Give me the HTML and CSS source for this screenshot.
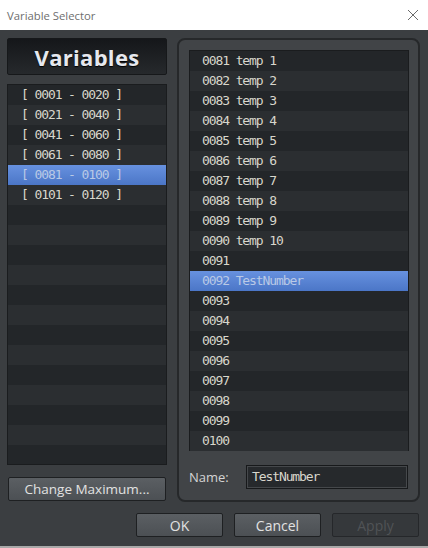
FILE: index.html
```html
<!DOCTYPE html>
<html lang="en">
<head>
  <meta charset="UTF-8">
  <title>Variable Selector</title>
  <link rel="stylesheet" href="styles.css">
</head>
<body>

  <!-- TITLE BAR -->
  <div class="titlebar">
    <span class="title">Variable Selector</span>
    <svg class="close" width="12" height="12" viewBox="0 0 12 12">
      <path d="M1 1 L11 11 M11 1 L1 11" stroke="#6a6a6a" stroke-width="1" fill="none"/>
    </svg>
  </div>

  <div class="dialog">
    <div class="main">

      <!-- LEFT: ranges -->
      <div class="left">
        <div class="heading">Variables</div>
        <ul class="list ranges">
          <li>[ 0001 - 0020 ]</li>
          <li>[ 0021 - 0040 ]</li>
          <li>[ 0041 - 0060 ]</li>
          <li>[ 0061 - 0080 ]</li>
          <li class="selected">[ 0081 - 0100 ]</li>
          <li>[ 0101 - 0120 ]</li>
          <li></li><li></li><li></li><li></li><li></li><li></li><li></li>
          <li></li><li></li><li></li><li></li><li></li><li></li>
        </ul>
        <button class="btn wide">Change Maximum...</button>
      </div>

      <!-- RIGHT: variables -->
      <div class="group">
        <ul class="list vars">
          <li>0081 temp 1</li>
          <li>0082 temp 2</li>
          <li>0083 temp 3</li>
          <li>0084 temp 4</li>
          <li>0085 temp 5</li>
          <li>0086 temp 6</li>
          <li>0087 temp 7</li>
          <li>0088 temp 8</li>
          <li>0089 temp 9</li>
          <li>0090 temp 10</li>
          <li>0091</li>
          <li class="selected">0092 TestNumber</li>
          <li>0093</li>
          <li>0094</li>
          <li>0095</li>
          <li>0096</li>
          <li>0097</li>
          <li>0098</li>
          <li>0099</li>
          <li>0100</li>
        </ul>
        <div class="name-row">
          <label>Name:</label>
          <div class="field">TestNumber</div>
        </div>
      </div>

    </div>

    <div class="footer">
      <button class="btn">OK</button>
      <button class="btn">Cancel</button>
      <button class="btn disabled">Apply</button>
    </div>
  </div>

  <div class="edge"></div>

</body>
</html>
```

FILE: styles.css
```css
body {
  margin: 0;
  width: 428px;
  height: 548px;
  overflow: hidden;
  background: #3b3e41;
  font-family: "Open Sans", "Noto Sans", sans-serif;
}

.titlebar {
  height: 30px;
  background: #fff;
  display: flex;
  align-items: center;
  justify-content: space-between;
  padding: 0 9px 0 7px;
}

.title {
  font-size: 11.3px;
  color: #6e6e6e;
}

.dialog {
  height: 516px;
  box-sizing: border-box;
  padding: 8px 8px 0 7px;
}

.main {
  display: flex;
  gap: 10px;
}

.left {
  width: 160px;
  display: flex;
  flex-direction: column;
}

.heading {
  height: 35px;
  border: 1px solid #16181a;
  border-radius: 2px;
  background: linear-gradient(#15171a, #26292c);
  color: #e6e8ee;
  font-size: 22px;
  font-weight: bold;
  text-align: center;
  line-height: 36px;
  letter-spacing: 0.3px;
  text-shadow: 0 1px 1px #000;
}

.list {
  list-style: none;
  margin: 0;
  padding: 0;
  border: 1px solid #1a1c1e;
  background: #25282b;
  font-family: "DejaVu Sans Mono", monospace;
  font-size: 13px;
  letter-spacing: -1.1px;
  color: #d8d6cc;
}

.list li {
  height: 20px;
  line-height: 20px;
  padding-left: 12px;
  white-space: pre;
}

.list li:nth-child(odd) {
  background: #232629;
}

.list li:nth-child(even) {
  background: #2b2e31;
}

.list li.selected {
  background: linear-gradient(#6791df, #4b76c7);
  color: #b9c9e6;
}

.ranges {
  margin-top: 9px;
  height: 379px;
  overflow: hidden;
}

.ranges li {
  padding-left: 13px;
}

.btn {
  height: 24px;
  padding: 0;
  border: 1px solid #1e2022;
  border-radius: 2px;
  background: linear-gradient(#5b5f63, #4c5054);
  color: #e2e2e2;
  font-family: "Open Sans", "Noto Sans", sans-serif;
  font-size: 14px;
}

.btn.wide {
  width: 158px;
  margin: 12px 0 0 1px;
  font-size: 13.5px;
}

.btn.disabled {
  background: #35383b;
  border-color: #25272a;
  color: #505356;
}

.group {
  width: 243px;
  height: 464px;
  box-sizing: border-box;
  border: 2px solid #26282a;
  border-radius: 8px;
  background: #414447;
  padding: 10px 10px 0 10px;
}

.vars {
  width: 218px;
  height: 399px;
}

.vars li {
  padding-left: 12px;
}

.name-row {
  display: flex;
  align-items: center;
  margin-top: 14px;
}

.name-row label {
  width: 57px;
  font-size: 13px;
  color: #d4d4d4;
}

.field {
  width: 162px;
  height: 24px;
  box-sizing: border-box;
  border: 1px solid #17191b;
  box-shadow: inset 0 0 0 1px #45484b;
  background: #26292c;
  font-family: "DejaVu Sans Mono", monospace;
  font-size: 13px;
  letter-spacing: -1.1px;
  line-height: 22px;
  color: #d8d6cc;
  padding-left: 5px;
}

.footer {
  display: flex;
  justify-content: flex-end;
  gap: 11px;
  margin-top: 11px;
  padding-right: 1px;
}

.footer .btn {
  width: 87px;
}

.edge {
  height: 2px;
  background: #a9a9a9;
}
```
